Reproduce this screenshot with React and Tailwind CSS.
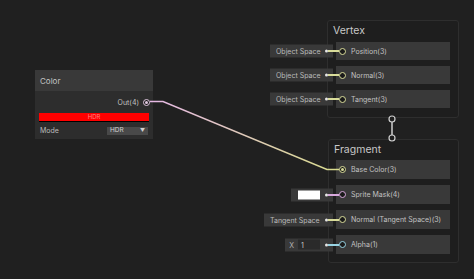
import React from "react";

const font = { fontFamily: "Inter, 'Noto Sans', sans-serif" };

function Port({ color, filled }) {
  return (
    <span
      className="relative flex h-[7px] w-[7px] shrink-0 items-center justify-center rounded-full border-[1.5px] bg-[#1a1a1a]"
      style={{ borderColor: color }}
    >
      {filled && <span className="h-[3px] w-[3px] rounded-full" style={{ background: color }} />}
    </span>
  );
}

function Row({ label, color, filled, input, h }) {
  return (
    <div className={`relative flex ${h} items-center bg-[#393939] pl-[3px]`}>
      {input && (
        <>
          <div className="absolute right-full top-1/2 mr-[3px] flex h-[13px] -translate-y-1/2 items-center whitespace-nowrap bg-[#393939] leading-none">
            {input}
            <span className="mx-[5px] h-[3px] w-[3px] rounded-full bg-[#e6e6e6]" />
          </div>
          <span
            className="absolute left-[-8px] top-1/2 h-[2px] w-[11px] -translate-y-1/2"
            style={{ background: color }}
          />
        </>
      )}
      <Port color={color} filled={filled} />
      <span className="ml-[5px] whitespace-nowrap text-[7px] leading-none text-[#c2c2c2]">{label}</span>
    </div>
  );
}

const Txt = ({ w, children }) => (
  <div className={`flex h-full ${w} items-center pl-[6px] text-[7px] leading-none text-[#b9b9b9]`}>{children}</div>
);

export default function App() {
  const yellow = "#d9dc9a";
  return (
    <div className="relative h-[279px] w-[474px] overflow-hidden bg-[#202020] leading-none" style={font}>
      {/* Color node */}
      <div className="absolute left-[35px] top-[70px] flex w-[118px] flex-col bg-[#2d2d2d]">
        <div className="flex h-[21px] items-center bg-[#393939] pl-[5px] text-[8px] text-[#c4c4c4]">Color</div>
        <div className="flex h-[22px] items-center justify-end gap-[4px] pr-[3px]">
          <span className="text-[7px] text-[#c2c2c2]">Out(4)</span>
          <Port color="#e0c8e0" filled />
        </div>
        <div className="mx-[4px] flex h-[9px] items-center justify-center border-b-[1.5px] border-black bg-[#ff0000] text-[6px] text-[#ff8080]">
          HDR
        </div>
        <div className="flex h-[17px] items-center justify-between pl-[5px] pr-[5px]">
          <span className="text-[7px] text-[#bcbcbc]">Mode</span>
          <div className="flex h-[8px] w-[41px] items-center justify-between bg-[#494949] px-[3px] text-[6.5px] text-[#d0d0d0]">
            <span>HDR</span>
            <span className="text-[5px]">▼</span>
          </div>
        </div>
      </div>

      {/* Vertex */}
      <div className="absolute left-[327px] top-[20px] flex h-[98px] w-[132px] flex-col gap-[6px] rounded-[3px] border border-[#2e2e2e] bg-[#1e1e1e] pb-[9px] pl-[8px] pr-[8px]">
        <div className="-mb-[6px] flex h-[21px] items-center text-[10.5px] text-[#c8c8c8]">
          <span className="-ml-[3px]">Vertex</span>
        </div>
        <Row h="h-[18px]" label="Position(3)" color={yellow} input={<Txt w="w-[50px]">Object Space</Txt>} />
        <Row h="h-[18px]" label="Normal(3)" color={yellow} input={<Txt w="w-[50px]">Object Space</Txt>} />
        <Row h="h-[18px]" label="Tangent(3)" color={yellow} input={<Txt w="w-[50px]">Object Space</Txt>} />
      </div>

      {/* Fragment */}
      <div className="absolute left-[328px] top-[139px] flex h-[124px] w-[131px] flex-col gap-[6px] rounded-[3px] border border-[#2e2e2e] bg-[#1e1e1e] pl-[7px] pr-[8px]">
        <div className="-mb-[6px] flex h-[20px] items-center text-[10.5px] text-[#c8c8c8]">
          <span className="-ml-[2px]">Fragment</span>
        </div>
        <Row h="h-[19px]" label="Base Color(3)" color={yellow} filled />
        <Row
          h="h-[19px]"
          label="Sprite Mask(4)"
          color="#d8a8dc"
          input={
            <div className="flex h-full items-center pl-[7px]">
              <span className="h-[9px] w-[22px] bg-white" />
            </div>
          }
        />
        <Row
          h="h-[19px]"
          label="Normal (Tangent Space)(3)"
          color={yellow}
          input={<Txt w="w-[56px]">Tangent Space</Txt>}
        />
        <Row
          h="h-[19px]"
          label="Alpha(1)"
          color="#98d4e4"
          input={
            <div className="flex h-full items-center">
              <span className="px-[4px] text-[7px] text-[#b0b0b0]">X</span>
              <span className="flex h-[10px] w-[22px] items-center bg-[#2a2a2a] pl-[3px] text-[7px] text-[#c8c8c8]">1</span>
            </div>
          }
        />
      </div>

      <svg className="pointer-events-none absolute inset-0" width="474" height="279">
        <defs>
          <linearGradient id="w" x1="150" y1="0" x2="339" y2="0" gradientUnits="userSpaceOnUse">
            <stop offset="0" stopColor="#e6b8e6" />
            <stop offset="1" stopColor="#d8dc8c" />
          </linearGradient>
        </defs>
        <path d="M150 101.5 L163 101.5 L327 169.5 L339 169.5" fill="none" stroke="url(#w)" strokeWidth="1.5" />
        <line x1="392" y1="122" x2="392" y2="135" stroke="#cfcfcf" strokeWidth="1.5" />
        <circle cx="392" cy="119" r="3" fill="#1e1e1e" stroke="#cfcfcf" strokeWidth="1.2" />
        <circle cx="392" cy="138" r="3" fill="#1e1e1e" stroke="#cfcfcf" strokeWidth="1.2" />
      </svg>
    </div>
  );
}
